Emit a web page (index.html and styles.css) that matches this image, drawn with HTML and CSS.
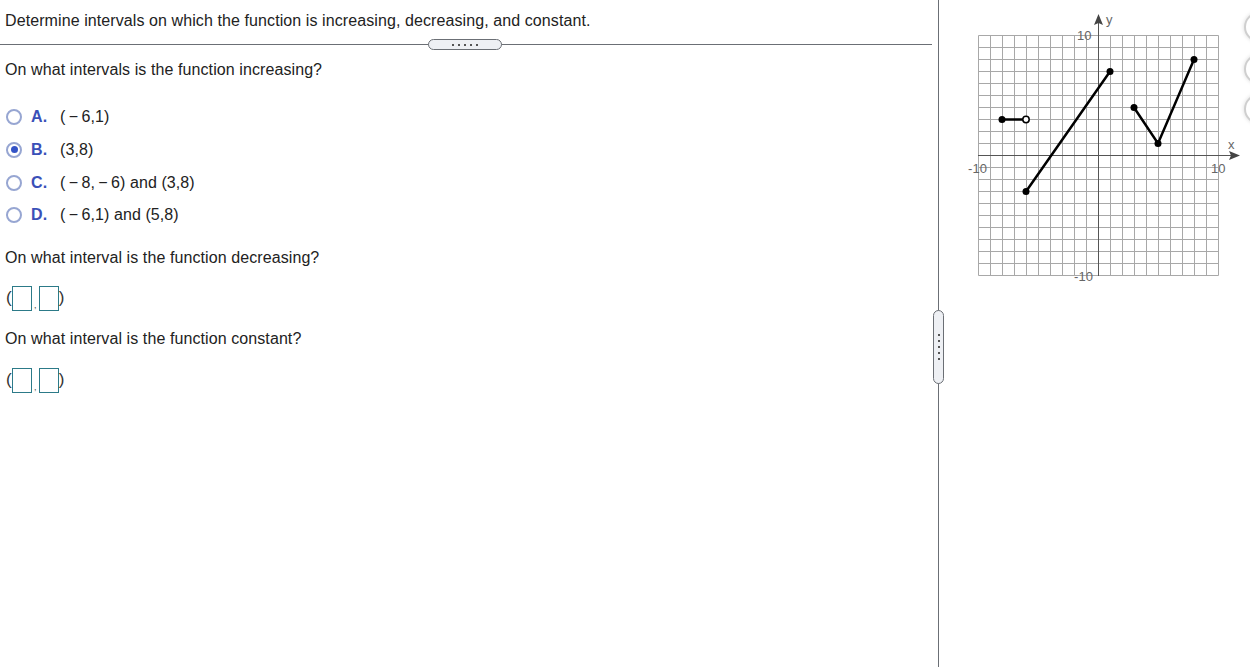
FILE: index.html
```html
<!DOCTYPE html>
<html>
<head>
<meta charset="utf-8">
<link rel="stylesheet" href="styles.css">
</head>
<body>
<div class="page">
  <main class="left">
    <p class="prompt">Determine intervals on which the function is increasing, decreasing, and constant.</p>
    <div class="hdivider"><span class="hhandle"><i></i><i></i><i></i><i></i><i></i></span></div>
    <p class="question q1">On what intervals is the function increasing?</p>
    <ul class="options">
      <li class="option"><span class="radio"></span><span class="letter">A.</span><span class="answer">(&#8201;−&#8201;6,1)</span></li>
      <li class="option"><span class="radio selected"></span><span class="letter">B.</span><span class="answer">(3,8)</span></li>
      <li class="option"><span class="radio"></span><span class="letter">C.</span><span class="answer">(&#8201;−&#8201;8,&#8201;−&#8201;6) and (3,8)</span></li>
      <li class="option"><span class="radio"></span><span class="letter">D.</span><span class="answer">(&#8201;−&#8201;6,1) and (5,8)</span></li>
    </ul>
    <p class="question q2">On what interval is the function decreasing?</p>
    <div class="interval i1"><span class="paren">(</span><span class="box"></span><span class="comma">,</span><span class="box"></span><span class="paren">)</span></div>
    <p class="question q3">On what interval is the function constant?</p>
    <div class="interval i2"><span class="paren">(</span><span class="box"></span><span class="comma">,</span><span class="box"></span><span class="paren">)</span></div>
  </main>
  <div class="vdivider"><span class="vhandle"><i></i><i></i><i></i><i></i><i></i></span></div>
  <aside class="right">
    <svg class="graph" width="302" height="290" viewBox="0 0 302 290">
      <g class="grid" stroke="#a8a8a8" stroke-width="1">
        <line x1="30.5" y1="35.5" x2="30.5" y2="275.5"/><line x1="42.5" y1="35.5" x2="42.5" y2="275.5"/><line x1="54.5" y1="35.5" x2="54.5" y2="275.5"/><line x1="66.5" y1="35.5" x2="66.5" y2="275.5"/><line x1="78.5" y1="35.5" x2="78.5" y2="275.5"/><line x1="90.5" y1="35.5" x2="90.5" y2="275.5"/><line x1="102.5" y1="35.5" x2="102.5" y2="275.5"/><line x1="114.5" y1="35.5" x2="114.5" y2="275.5"/><line x1="126.5" y1="35.5" x2="126.5" y2="275.5"/><line x1="138.5" y1="35.5" x2="138.5" y2="275.5"/>
        <line x1="162.5" y1="35.5" x2="162.5" y2="275.5"/><line x1="174.5" y1="35.5" x2="174.5" y2="275.5"/><line x1="186.5" y1="35.5" x2="186.5" y2="275.5"/><line x1="198.5" y1="35.5" x2="198.5" y2="275.5"/><line x1="210.5" y1="35.5" x2="210.5" y2="275.5"/><line x1="222.5" y1="35.5" x2="222.5" y2="275.5"/><line x1="234.5" y1="35.5" x2="234.5" y2="275.5"/><line x1="246.5" y1="35.5" x2="246.5" y2="275.5"/><line x1="258.5" y1="35.5" x2="258.5" y2="275.5"/><line x1="270.5" y1="35.5" x2="270.5" y2="275.5"/>
        <line x1="30.5" y1="35.5" x2="270.5" y2="35.5"/><line x1="30.5" y1="47.5" x2="270.5" y2="47.5"/><line x1="30.5" y1="59.5" x2="270.5" y2="59.5"/><line x1="30.5" y1="71.5" x2="270.5" y2="71.5"/><line x1="30.5" y1="83.5" x2="270.5" y2="83.5"/><line x1="30.5" y1="95.5" x2="270.5" y2="95.5"/><line x1="30.5" y1="107.5" x2="270.5" y2="107.5"/><line x1="30.5" y1="119.5" x2="270.5" y2="119.5"/><line x1="30.5" y1="131.5" x2="270.5" y2="131.5"/><line x1="30.5" y1="143.5" x2="270.5" y2="143.5"/>
        <line x1="30.5" y1="167.5" x2="270.5" y2="167.5"/><line x1="30.5" y1="179.5" x2="270.5" y2="179.5"/><line x1="30.5" y1="191.5" x2="270.5" y2="191.5"/><line x1="30.5" y1="203.5" x2="270.5" y2="203.5"/><line x1="30.5" y1="215.5" x2="270.5" y2="215.5"/><line x1="30.5" y1="227.5" x2="270.5" y2="227.5"/><line x1="30.5" y1="239.5" x2="270.5" y2="239.5"/><line x1="30.5" y1="251.5" x2="270.5" y2="251.5"/><line x1="30.5" y1="263.5" x2="270.5" y2="263.5"/><line x1="30.5" y1="275.5" x2="270.5" y2="275.5"/>
      </g>
      <g class="axes" stroke="#555" stroke-width="1">
        <line x1="30" y1="155.5" x2="288" y2="155.5"/>
        <line x1="150.5" y1="276" x2="150.5" y2="20"/>
      </g>
      <path d="M292 155.5 L281 151 L283 155.5 L281 160 Z" fill="#444"/>
      <path d="M150.5 14 L146 25 L150.5 23 L155 25 Z" fill="#444"/>
      <g class="labels" fill="#666" font-family="Liberation Sans, Arial, sans-serif" font-size="13">
        <text x="158" y="24">y</text>
        <text x="280" y="149">x</text>
        <text x="129" y="40">10</text>
        <text x="20" y="173">-10</text>
        <text x="263" y="173">10</text>
        <text x="126" y="281">-10</text>
      </g>
      <g class="plot" stroke="#000" stroke-width="2.5" stroke-linecap="round" fill="none">
        <line x1="54" y1="119.5" x2="78" y2="119.5"/>
        <line x1="78" y1="191.5" x2="162" y2="71.5"/>
        <polyline points="186,107.5 210,143.5 246,59.5"/>
      </g>
      <g class="dots" fill="#000">
        <circle cx="54" cy="119.5" r="3.5"/>
        <circle cx="78" cy="191.5" r="3.5"/>
        <circle cx="162" cy="71.5" r="3.5"/>
        <circle cx="186" cy="107.5" r="3.5"/>
        <circle cx="210" cy="143.5" r="3.5"/>
        <circle cx="246" cy="59.5" r="3.5"/>
      </g>
      <circle cx="78" cy="119.5" r="3.2" fill="#fff" stroke="#000" stroke-width="1.5"/>
    </svg>
    <span class="edgebtn b1"></span>
    <span class="edgebtn b2"></span>
    <span class="edgebtn b3"></span>
  </aside>
</div>
</body>
</html>
```

FILE: styles.css
```css
html, body {
  margin: 0;
  padding: 0;
  background: #fff;
}
body {
  font-family: "Liberation Sans", Arial, sans-serif;
  font-size: 16px;
  line-height: 18px;
  letter-spacing: 0.09px;
  color: #222;
  overflow: hidden;
}
.page {
  display: flex;
  height: 667px;
  width: 1250px;
}
.left {
  width: 932px;
  flex: none;
  position: relative;
}
.prompt {
  margin: 12px 0 0 5px;
}
.hdivider {
  position: relative;
  margin-top: 14px;
  height: 1px;
  background: #6b6f75;
}
.hhandle {
  position: absolute;
  left: 428px;
  top: -5px;
  width: 74px;
  height: 11px;
  box-sizing: border-box;
  border: 1px solid #6b6f75;
  border-radius: 6px;
  background: #eef0f4;
  display: flex;
  align-items: center;
  justify-content: center;
  gap: 4px;
}
.hhandle i {
  display: block;
  width: 2px;
  height: 2px;
  background: #555;
}
.question {
  margin: 0 0 0 5px;
}
.q1 { margin-top: 16px; }
.options {
  list-style: none;
  margin: 22px 0 0 0;
  padding: 0;
}
.option {
  display: flex;
  align-items: center;
  height: 32.67px;
}
.radio {
  width: 16px;
  height: 16px;
  box-sizing: border-box;
  border: 2px solid #97a6d2;
  border-radius: 50%;
  margin-left: 6px;
  position: relative;
}
.radio.selected::after {
  content: "";
  position: absolute;
  left: 2.5px;
  top: 2.5px;
  width: 7px;
  height: 7px;
  border-radius: 50%;
  background: #3353c6;
}
.letter {
  color: #3a50b8;
  font-weight: bold;
  margin-left: 9px;
  width: 29px;
}
.q2 { margin-top: 17px; }
.q3 { margin-top: 19px; }
.interval {
  display: flex;
  align-items: center;
  margin-left: 6px;
  height: 25px;
}
.i1 { margin-top: 19px; }
.i2 { margin-top: 20px; }
.paren {
  font-size: 17px;
  color: #333;
}
.box {
  width: 20px;
  height: 25px;
  box-sizing: border-box;
  border: 1.5px solid #2c7a88;
}
.comma {
  font-size: 9px;
  width: 7px;
  text-align: center;
  align-self: flex-end;
  line-height: 12px;
  color: #444;
}
.vdivider {
  position: relative;
  width: 1px;
  margin-left: 6px;
  background: #6b6f75;
  flex: none;
}
.vhandle {
  position: absolute;
  left: -5px;
  top: 310px;
  width: 11px;
  height: 74px;
  box-sizing: border-box;
  border: 1px solid #6b6f75;
  border-radius: 6px;
  background: #eef0f4;
  display: flex;
  flex-direction: column;
  align-items: center;
  justify-content: center;
  gap: 4px;
}
.vhandle i {
  display: block;
  width: 2px;
  height: 2px;
  background: #555;
}
.right {
  position: relative;
  flex: 1;
}
.graph {
  display: block;
  margin-left: 9px;
}
.edgebtn {
  position: absolute;
  left: 305px;
  width: 30px;
  height: 30px;
  box-sizing: border-box;
  border: 2px solid #cfcfcf;
  border-radius: 50%;
  box-shadow: 0 0 4px rgba(0,0,0,0.15);
  background: #fff;
}
.b1 { top: 12px; }
.b2 { top: 54px; }
.b3 { top: 94px; }
```
